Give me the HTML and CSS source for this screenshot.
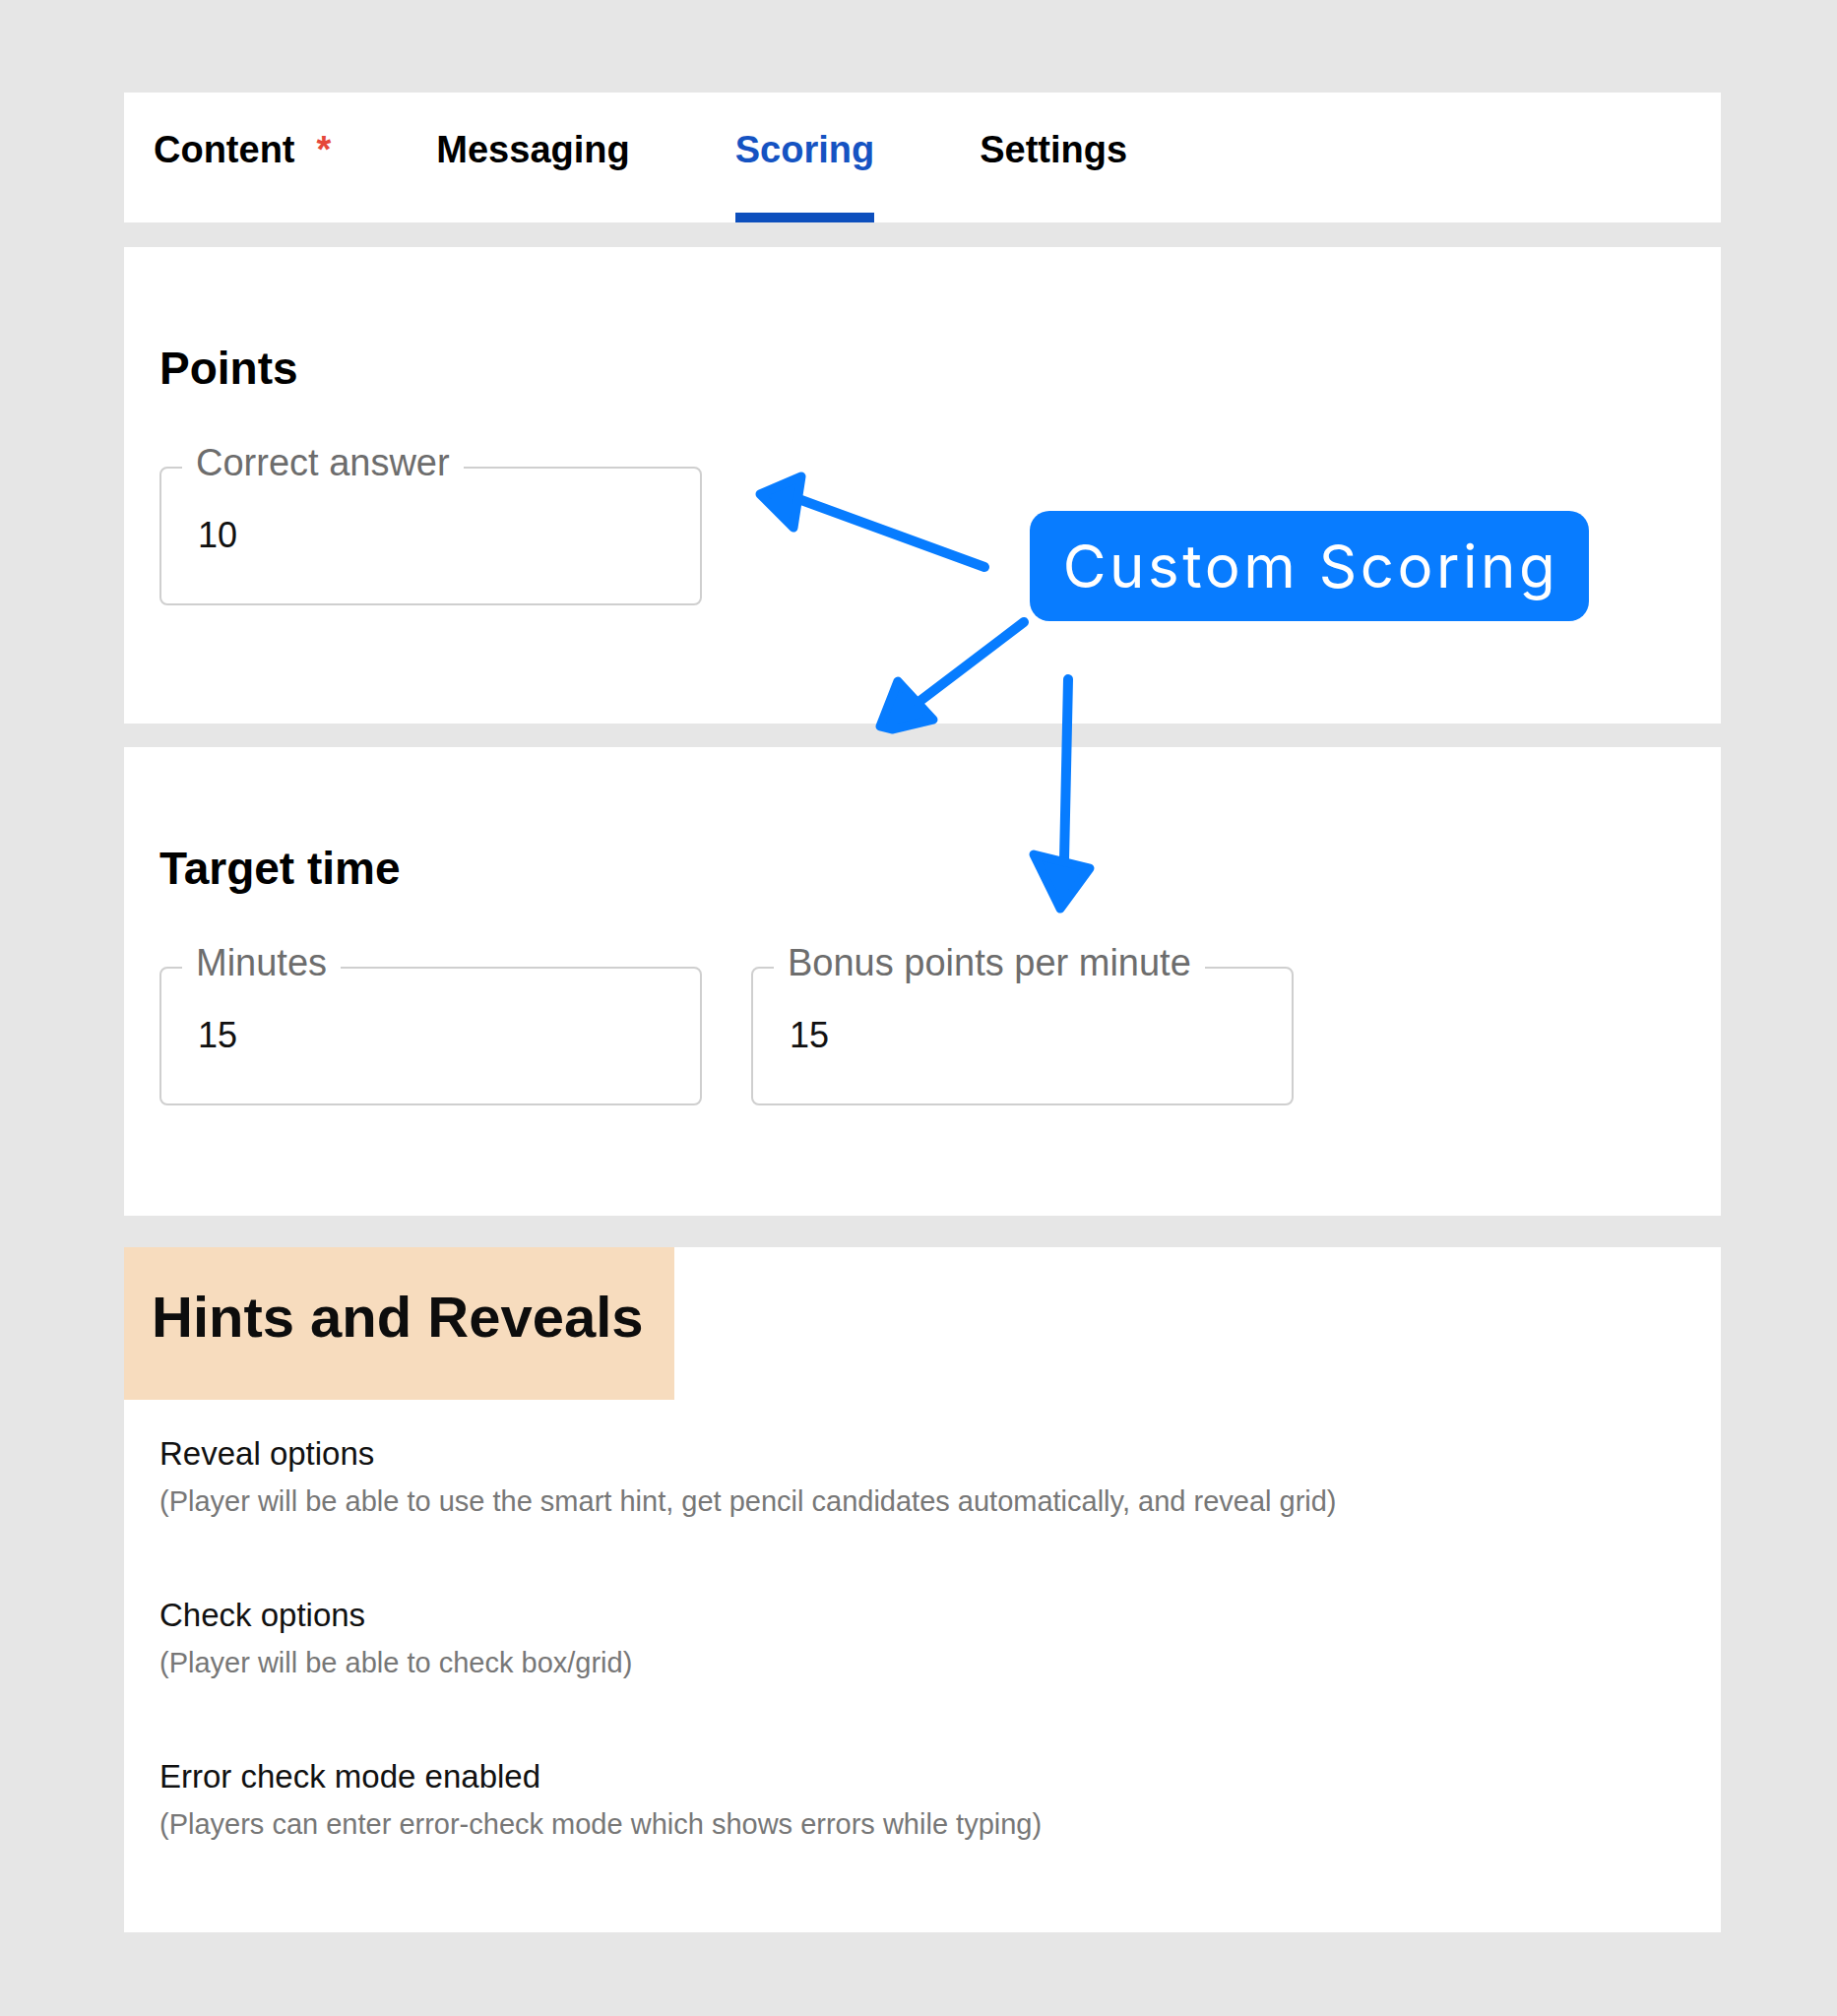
FILE: index.html
```html
<!DOCTYPE html>
<html lang="en">
<head>
<meta charset="utf-8">
<title>Scoring</title>
<link rel="stylesheet" href="styles.css">
</head>
<body>
<div class="page">
  <div class="card">
    <nav class="tabs">
      <div class="tab">Content<span class="req">*</span></div>
      <div class="tab">Messaging</div>
      <div class="tab active">Scoring</div>
      <div class="tab">Settings</div>
    </nav>

    <section class="section section-points">
      <h2 class="heading">Points</h2>
      <div class="row">
        <fieldset class="field">
          <legend class="field-label">Correct answer</legend>
          <div class="field-value">10</div>
        </fieldset>
      </div>
    </section>

    <section class="section section-time">
      <h2 class="heading">Target time</h2>
      <div class="row">
        <fieldset class="field">
          <legend class="field-label">Minutes</legend>
          <div class="field-value">15</div>
        </fieldset>
        <fieldset class="field">
          <legend class="field-label">Bonus points per minute</legend>
          <div class="field-value">15</div>
        </fieldset>
      </div>
    </section>

    <section class="section-hints">
      <h2 class="hints-title">Hints and Reveals</h2>
      <div class="items">
        <div class="item">
          <div class="item-title">Reveal options</div>
          <div class="item-desc">(Player will be able to use the smart hint, get pencil candidates automatically, and reveal grid)</div>
        </div>
        <div class="item">
          <div class="item-title">Check options</div>
          <div class="item-desc">(Player will be able to check box/grid)</div>
        </div>
        <div class="item">
          <div class="item-title">Error check mode enabled</div>
          <div class="item-desc">(Players can enter error-check mode which shows errors while typing)</div>
        </div>
      </div>
    </section>
  </div>

  <svg class="annotations" viewBox="0 0 1866 2048" width="1866" height="2048" aria-hidden="true">
    <g stroke="#077cff" fill="#077cff" stroke-linecap="round" stroke-linejoin="round">
      <line x1="1000" y1="576" x2="814" y2="508" stroke-width="10"/>
      <polygon points="772,502 814,484 806,536" stroke-width="9"/>
      <line x1="1040" y1="632" x2="932" y2="714" stroke-width="10"/>
      <polygon points="894,738 912,692 948,731 906,741" stroke-width="9"/>
      <line x1="1085" y1="690" x2="1081" y2="874" stroke-width="10"/>
      <polygon points="1050,868 1107,882 1077,923" stroke-width="9"/>
    </g>
  </svg>

  <div class="badge">Custom Scoring</div>
</div>
</body>
</html>
```

FILE: styles.css
```css
html, body {
  margin: 0;
  padding: 0;
}

body {
  background: #e6e6e6;
  font-family: "Liberation Sans", Arial, Helvetica, sans-serif;
  color: #000;
}

.page {
  position: relative;
  width: 1866px;
  height: 2048px;
  padding: 94px 0 0 126px;
  box-sizing: border-box;
  overflow: hidden;
}

.card {
  width: 1622px;
}

/* Tabs */
.tabs {
  display: flex;
  gap: 107px;
  height: 132px;
  padding-left: 30px;
  background: #fff;
  box-sizing: border-box;
}

.tab {
  height: 132px;
  box-sizing: border-box;
  padding-top: 39px;
  font-size: 38px;
  line-height: 38px;
  font-weight: 700;
  color: #000;
  white-space: nowrap;
}

.tab.active {
  color: #1553c2;
  border-bottom: 10px solid #0d4fbd;
}

.req {
  color: #e5473b;
  margin-left: 22px;
}

/* Sections */
.section {
  background: #fff;
  padding: 100px 36px 120px;
}

.section-points {
  margin-top: 25px;
}

.section-time {
  margin-top: 24px;
  padding-bottom: 112px;
}

.heading {
  margin: 0 0 54px;
  font-size: 46px;
  line-height: 46px;
  font-weight: 700;
  color: #000;
}

.row {
  display: flex;
  gap: 50px;
}

.field {
  width: 551px;
  min-width: 0;
  box-sizing: border-box;
  margin: 0;
  padding: 0 0 51px;
  border: 2px solid #cfcfcf;
  border-radius: 8px;
}

.field-label {
  margin-left: 21px;
  padding: 0 14px 10px;
  font-size: 38px;
  line-height: 38px;
  color: #6d6d6d;
  white-space: nowrap;
}

.field-value {
  padding: 27px 0 0 37px;
  font-size: 36px;
  line-height: 36px;
  color: #111;
}

/* Hints and reveals */
.section-hints {
  margin-top: 32px;
  background: #fff;
}

.hints-title {
  display: inline-block;
  margin: 0;
  padding: 42px 31px 56px 28px;
  background: #f7dcbe;
  font-size: 58px;
  line-height: 57px;
  font-weight: 700;
  color: #0d0d0d;
}

.items {
  padding: 38px 36px 95px;
}

.item + .item {
  margin-top: 84px;
}

.item-title {
  font-size: 33px;
  line-height: 33px;
  color: #111;
}

.item-desc {
  margin-top: 18px;
  font-size: 29px;
  line-height: 29px;
  color: #777;
}

/* Annotation overlay */
.annotations {
  position: absolute;
  left: 0;
  top: 0;
  pointer-events: none;
}

.badge {
  position: absolute;
  left: 1046px;
  top: 519px;
  width: 568px;
  height: 112px;
  box-sizing: border-box;
  padding-left: 3px;
  border-radius: 20px;
  background: #087cff;
  color: #fff;
  display: flex;
  align-items: center;
  justify-content: center;
  font-family: Inter, "Noto Sans", sans-serif;
  font-size: 60px;
  font-weight: 400;
  letter-spacing: 3.5px;
  white-space: nowrap;
}
```
